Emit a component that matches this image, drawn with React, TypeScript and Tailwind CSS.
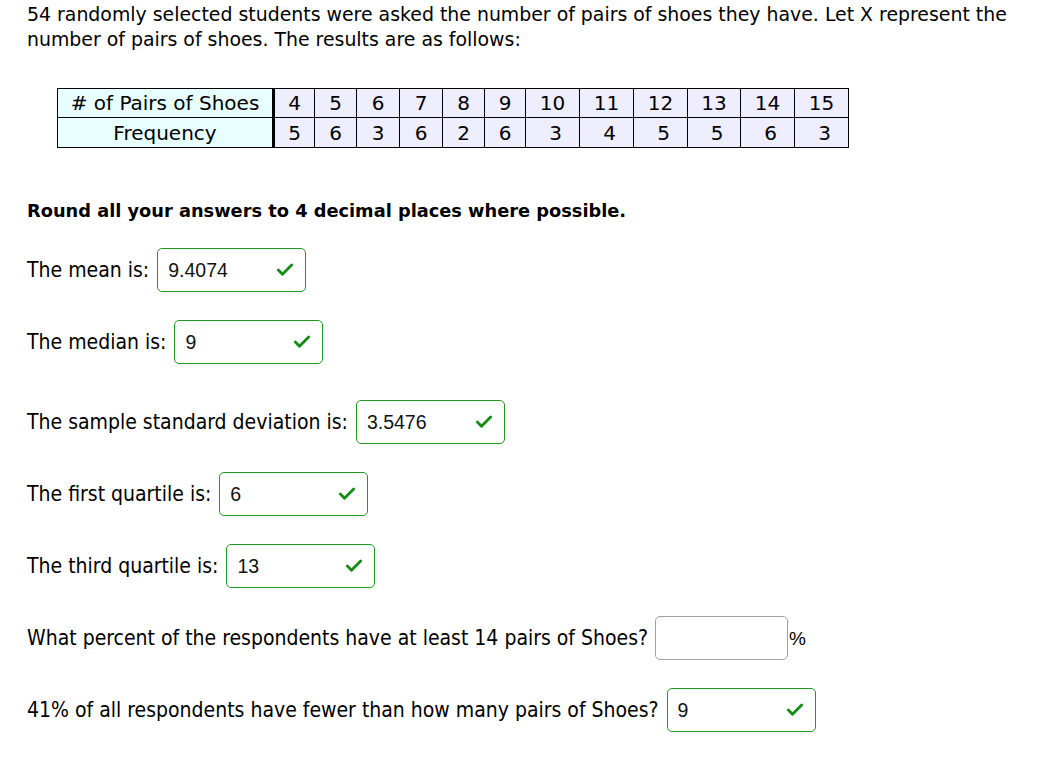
import { Check } from 'lucide-react'

const shoes = [4, 5, 6, 7, 8, 9, 10, 11, 12, 13, 14, 15]
const freq = [5, 6, 3, 6, 2, 6, 3, 4, 5, 5, 6, 3]
const colW = ['w-[41px]', 'w-[42px]', 'w-[43px]', 'w-[43px]', 'w-[42px]', 'w-[41px]', 'w-[54px]', 'w-[54px]', 'w-[54px]', 'w-[53px]', 'w-[54px]', 'w-[54px]']

function Answer({ value, width = 'w-[149px]', ok = true }: { value?: string; width?: string; ok?: boolean }) {
  return (
    <div
      className={`${width} h-[44px] rounded-[5px] border flex items-center justify-between pl-[10px] pr-[10px] bg-white ${
        ok ? 'border-[#1f9a1f]' : 'border-[#a0a0a0]'
      }`}
    >
      <span className="text-[19.5px] text-[#111] font-['Liberation_Sans',Arial,sans-serif]">{value}</span>
      {ok && <Check size={20} strokeWidth={3.4} className="text-[#158c15]" />}
    </div>
  )
}

function Row({ label, children, mt }: { label: string; children: React.ReactNode; mt: string }) {
  return (
    <div className={`flex items-center ${mt}`}>
      <span className="mr-[8px] text-[21px] font-['DejaVu_Sans_Condensed','DejaVu_Sans',sans-serif]">{label}</span>
      {children}
    </div>
  )
}

export default function App() {
  return (
    <div className="bg-white min-h-[761px] px-[27px] pt-[2px] text-black text-[18.9px] leading-[25px] font-['DejaVu_Sans',sans-serif]">
      <p className="max-w-[1010px]">
        54 randomly selected students were asked the number of pairs of shoes they have. Let X represent the number of pairs of shoes. The results are as follows:
      </p>

      <table className="ml-[30px] mt-[36px] border-collapse text-center text-[20px]">
        <tbody>
          <tr className="h-[29px]">
            <td className="w-[216px] border border-black bg-[#e8ffff] border-r-[3px] leading-none">
              # of Pairs of Shoes
            </td>
            {shoes.map((s, i) => (
              <td key={s} className={`${colW[i]} border border-black bg-[#eeeeff] leading-none`}>
                {s}
              </td>
            ))}
          </tr>
          <tr className="h-[30px]">
            <td className="border border-black bg-[#e8ffff] border-r-[3px] leading-none">Frequency</td>
            {freq.map((f, i) => (
              <td key={i} className={`border border-black bg-[#eeeeff] leading-none ${i > 5 ? 'pl-[6px]' : ''}`}>
                {f}
              </td>
            ))}
          </tr>
        </tbody>
      </table>

      <p className="mt-[50px] font-bold text-[17.8px]">Round all your answers to 4 decimal places where possible.</p>

      <Row label="The mean is:" mt="mt-[25px]">
        <Answer value="9.4074" />
      </Row>
      <Row label="The median is:" mt="mt-[28px]">
        <Answer value="9" />
      </Row>
      <Row label="The sample standard deviation is:" mt="mt-[36px]">
        <Answer value="3.5476" />
      </Row>
      <Row label="The first quartile is:" mt="mt-[28px]">
        <Answer value="6" />
      </Row>
      <Row label="The third quartile is:" mt="mt-[28px]">
        <Answer value="13" />
      </Row>
      <div className="flex items-center mt-[28px]">
        <span className="mr-[7px] text-[21px] font-['DejaVu_Sans_Condensed','DejaVu_Sans',sans-serif]">
          What percent of the respondents have at least 14 pairs of Shoes?
        </span>
        <Answer width="w-[133px]" ok={false} />
        <span className="text-[19px] font-['Liberation_Sans',Arial,sans-serif] ml-px">%</span>
      </div>
      <Row label="41% of all respondents have fewer than how many pairs of Shoes?" mt="mt-[28px]">
        <Answer value="9" />
      </Row>
    </div>
  )
}
